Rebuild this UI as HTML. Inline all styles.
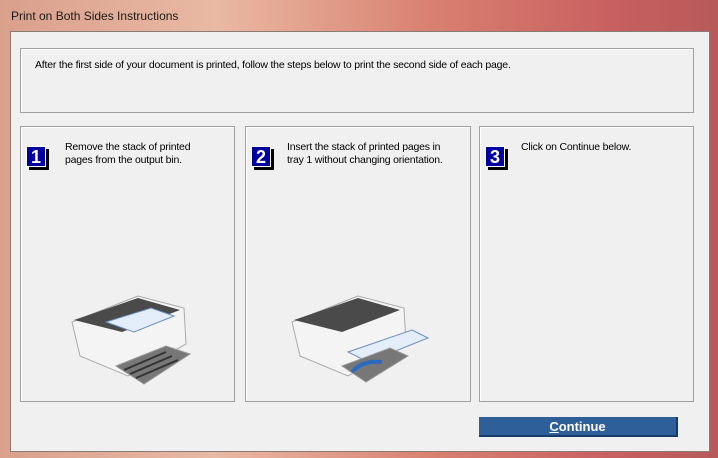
<!DOCTYPE html>
<html><head><style>
body{margin:0;width:718px;height:458px;overflow:hidden;font-family:"Liberation Sans",sans-serif;background:linear-gradient(90deg,#d9a08c 0%,#e9b9a3 30%,#d98070 60%,#c86060 85%,#b85a5a 100%);position:relative}
.title{position:absolute;left:11px;top:9px;font-size:12px;color:#1a1a1a}
.client{position:absolute;left:10px;top:31px;width:698px;height:419px;background:#f0f0f0;border:1px solid #8a7a78}
.box{position:absolute;border:1px solid #a0a0a0;background:#f0f0f0;box-shadow:inset 1px 1px 0 #fff}
.t{position:absolute;font-size:10.5px;color:#000;line-height:13px;letter-spacing:-0.2px}
.num{position:absolute;width:20px;height:21px;background:#0000a0;color:#fff;font-weight:bold;font-size:18px;line-height:21px;text-align:center;box-shadow:3px 3px 0 #000;border:1px solid #fff;box-sizing:border-box}
.btn{position:absolute;left:479px;top:417px;width:199px;height:20px;background:#2f5f98;color:#fff;font-weight:bold;font-size:13px;text-align:center;line-height:20px;border-bottom:2px solid #163a6a;border-right:2px solid #163a6a;box-sizing:border-box}
</style></head><body>
<div class="title">Print on Both Sides Instructions</div>
<div class="client"></div>
<div class="box" style="left:20px;top:48px;width:672px;height:63px"></div>
<div class="t" style="left:35px;top:59px">After the first side of your document is printed, follow the steps below to print the second side of each page.</div>
<div class="box" style="left:20px;top:126px;width:213px;height:274px"></div>
<div class="box" style="left:245px;top:126px;width:224px;height:274px"></div>
<div class="box" style="left:479px;top:126px;width:213px;height:274px"></div>
<div class="num" style="left:26px;top:146px">1</div>
<div class="num" style="left:251px;top:146px">2</div>
<div class="num" style="left:485px;top:146px">3</div>
<div class="t" style="left:65px;top:141px">Remove the stack of printed<br>pages from the output bin.</div>
<div class="t" style="left:287px;top:141px">Insert the stack of printed pages in<br>tray 1 without changing orientation.</div>
<div class="t" style="left:521px;top:141px">Click on Continue below.</div>
<svg style="position:absolute;left:66px;top:292px" width="130" height="95">
<path d="M6 30 L72 4 L118 16 L120 52 L62 84 L14 64 Z" fill="#f4f4f4" stroke="#aaa"/>
<path d="M8 28 L72 6 L114 18 L56 40 Z" fill="#4a4a4a"/>
<path d="M40 30 L85 16 L108 24 L68 40 Z" fill="#e4eefa" stroke="#6a8fbf"/>
<path d="M50 74 L100 54 L124 62 L78 92 Z" fill="#777" stroke="#999"/>
<path d="M58 78 L100 60 M64 82 L106 64 M70 86 L112 68" stroke="#333" stroke-width="2"/>
</svg>
<svg style="position:absolute;left:290px;top:292px" width="140" height="95">
<path d="M2 30 L68 4 L114 16 L116 52 L58 84 L10 64 Z" fill="#f4f4f4" stroke="#aaa"/>
<path d="M4 28 L68 6 L110 18 L52 40 Z" fill="#4a4a4a"/>
<path d="M58 60 L122 38 L138 46 L78 70 Z" fill="#e4eefa" stroke="#6a8fbf"/>
<path d="M52 74 L100 56 L118 64 L76 90 Z" fill="#777" stroke="#999"/>
<path d="M92 70 Q72 68 62 80" stroke="#2a6bbf" stroke-width="4" fill="none"/>
</svg>
<div class="btn"><u>C</u>ontinue</div>
</body></html>
